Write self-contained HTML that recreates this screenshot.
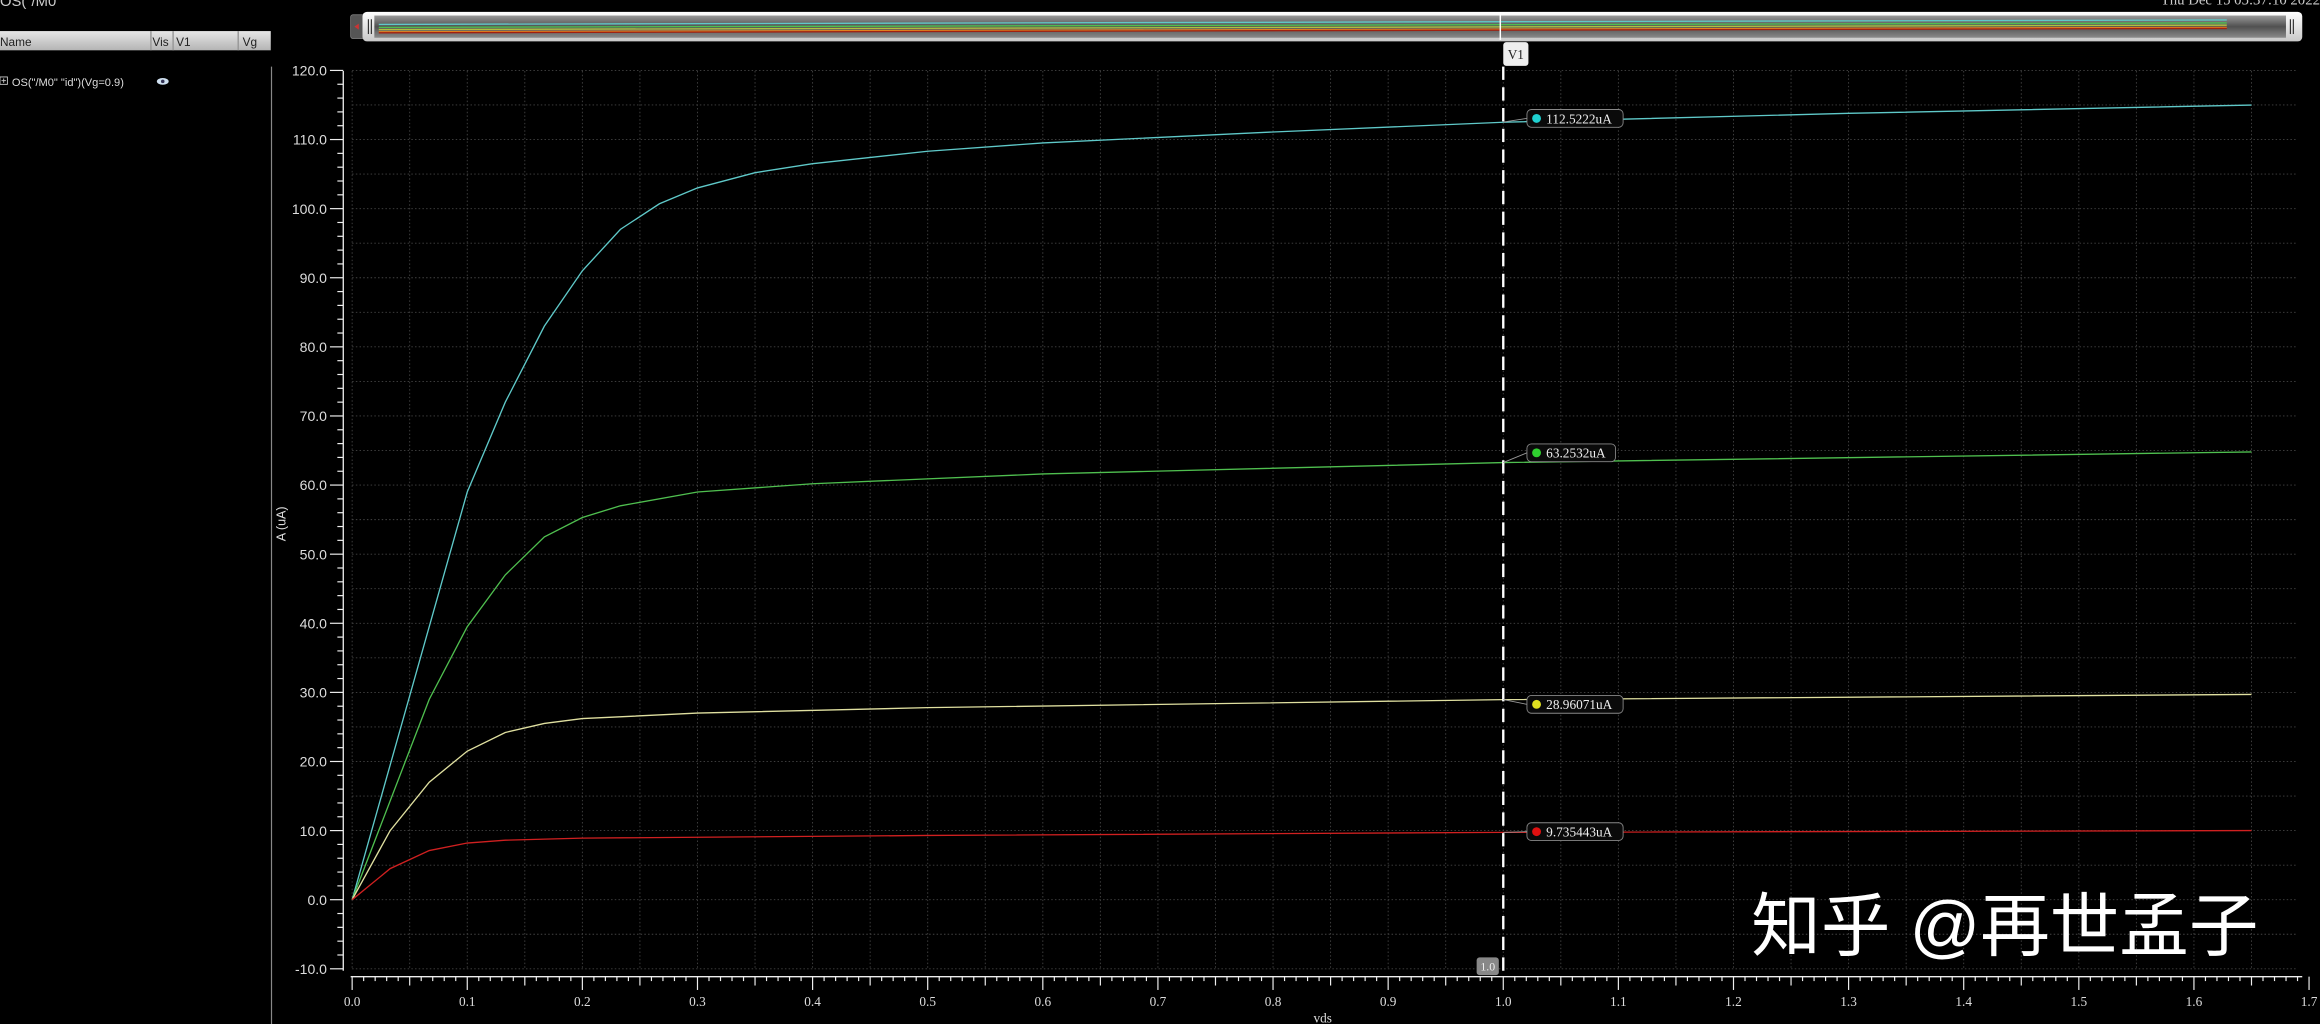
<!DOCTYPE html>
<html><head><meta charset="utf-8">
<style>
html,body{margin:0;padding:0;background:#000;width:2320px;height:1024px;overflow:hidden}
svg{display:block}
text{font-family:"Liberation Sans",sans-serif}
.s{font-family:"Liberation Serif",serif}
</style></head>
<body>
<svg id="g" width="2320" height="1024" viewBox="0 0 1568 692" preserveAspectRatio="none" xmlns="http://www.w3.org/2000/svg">
<defs>
<linearGradient id="hdr" x1="0" y1="0" x2="0" y2="1"><stop offset="0" stop-color="#e6e6e6"/><stop offset="1" stop-color="#b4b4b4"/></linearGradient>
<linearGradient id="bar" x1="0" y1="0" x2="0" y2="1"><stop offset="0" stop-color="#9a9a9a"/><stop offset="0.5" stop-color="#505050"/><stop offset="1" stop-color="#8a8a8a"/></linearGradient>
<linearGradient id="frm" x1="0" y1="0" x2="0" y2="1"><stop offset="0" stop-color="#ffffff"/><stop offset="1" stop-color="#c8c8c8"/></linearGradient>
</defs>
<rect width="1568" height="692" fill="#000"/>
<!-- top-left title -->
<text x="0" y="4" fill="#ccc" font-size="10">OS("/M0</text>
<!-- header -->
<rect x="0" y="21" width="183" height="13" fill="url(#hdr)"/>
<line x1="102" y1="21" x2="102" y2="34" stroke="#999"/>
<line x1="117" y1="21" x2="117" y2="34" stroke="#999"/>
<line x1="161" y1="21" x2="161" y2="34" stroke="#999"/>
<text x="0" y="31" font-size="8" fill="#222">Name</text>
<text x="103" y="31" font-size="8" fill="#222">Vis</text>
<text x="119" y="31" font-size="8" fill="#222">V1</text>
<text x="164" y="31" font-size="8" fill="#222">Vg</text>
<rect x="0" y="52" width="5" height="5" fill="none" stroke="#ccc" stroke-width="0.6"/>
<line x1="1" y1="54.5" x2="4" y2="54.5" stroke="#ccc" stroke-width="0.6"/><line x1="2.5" y1="53" x2="2.5" y2="56" stroke="#ccc" stroke-width="0.6"/>
<text x="8" y="58" font-size="7.5" fill="#ddd">OS("/M0" "id")(Vg=0.9)</text>
<ellipse cx="110" cy="55" rx="4" ry="2.3" fill="#cfe0f0"/><circle cx="110" cy="55" r="1.2" fill="#335"/>
<line x1="183.5" y1="45" x2="183.5" y2="692" stroke="#888" stroke-width="0.8"/>
<!-- date -->
<text x="1568" y="3" text-anchor="end" class="s" font-size="10" fill="#ccc">Thu Dec 15 05:37:10 2022</text>
<!-- scrollbar -->
<rect x="237" y="10" width="10" height="16" rx="1.5" fill="#555" stroke="#888" stroke-width="0.5"/>
<path d="M239.5 18 l3 -2 v4 z" fill="#c33"/>
<rect x="245" y="8" width="1311" height="20" rx="3" fill="url(#frm)"/>
<rect x="253" y="10.5" width="1292" height="15" fill="url(#bar)"/>
<line x1="249" y1="13" x2="249" y2="23" stroke="#333" stroke-width="0.8"/><line x1="251" y1="13" x2="251" y2="23" stroke="#333" stroke-width="0.8"/>
<line x1="1548" y1="13" x2="1548" y2="23" stroke="#333" stroke-width="0.8"/><line x1="1550" y1="13" x2="1550" y2="23" stroke="#333" stroke-width="0.8"/>
<g id="mini"></g>
<line x1="1014" y1="9" x2="1014" y2="27" stroke="#fff" stroke-width="1"/>
<!-- V1 tag -->
<rect x="1016" y="28.5" width="17" height="16" rx="2" fill="#eee"/>
<text x="1024.5" y="40" text-anchor="middle" class="s" font-size="9" fill="#222">V1</text>
<g id="grid"></g>
<g id="axes"></g>
<g id="curves"></g>
<!-- cursor -->
<line x1="1016" y1="45" x2="1016" y2="656" stroke="#fff" stroke-width="1.6" stroke-dasharray="9,5"/>
<rect x="998" y="647" width="15" height="12" rx="2" fill="#888"/>
<text x="1005.5" y="656" text-anchor="middle" class="s" font-size="8" fill="#eee">1.0</text>
<g id="labels"></g>
<text x="894" y="691" text-anchor="middle" class="s" font-size="9" fill="#ddd">vds</text>
<text transform="translate(193,354) rotate(-90)" text-anchor="middle" font-size="8.5" fill="#ddd">A (uA)</text>
<text x="1355" y="642" text-anchor="middle" font-family="'Liberation Sans','Noto Sans CJK SC',sans-serif" font-size="47" fill="#fff">知乎 @再世孟子</text>
</svg>
<script>
var NS="http://www.w3.org/2000/svg";
function el(p,t,a,txt){var e=document.createElementNS(NS,t);for(var k in a)e.setAttribute(k,a[k]);if(txt!=null)e.textContent=txt;document.getElementById(p).appendChild(e);return e;}
var X0=238,XS=778,Y0=608,YS=4.67;
function X(v){return X0+XS*v}function Y(v){return Y0-YS*v}
// grid
for(var i=0;i<=33;i++){var x=X(i*0.05);if(x>1552)break;el("grid","line",{x1:x,y1:48,x2:x,y2:655,stroke:"#444","stroke-width":0.6,"stroke-dasharray":"1,1.5"});}
for(var v=-10;v<=120;v+=5){var y=Y(v);el("grid","line",{x1:238,y1:y,x2:1552,y2:y,stroke:"#444","stroke-width":0.6,"stroke-dasharray":"1,1.5"});}
// y axis
el("axes","line",{x1:232,y1:48,x2:232,y2:656,stroke:"#eee","stroke-width":0.9});
for(var v=-10;v<=120;v+=2){var y=Y(v),L=(v%10==0)?9:4;el("axes","line",{x1:232-L,y1:y,x2:232,y2:y,stroke:"#eee","stroke-width":0.8});
 if(v%10==0)el("axes","text",{x:221,y:y+3.5,"text-anchor":"end","font-size":9.5,fill:"#ddd"},v.toFixed(1));}
// x axis
el("axes","line",{x1:237,y1:660,x2:1556,y2:660,stroke:"#eee","stroke-width":0.9});
for(var i=0;i<=170;i++){var x=X(i/100),L=(i%10==0)?9:(i%5==0?6:3);el("axes","line",{x1:x,y1:660,x2:x,y2:660+L,stroke:"#eee","stroke-width":0.8});
 if(i%10==0)el("axes","text",{x:x,y:680,"text-anchor":"middle","class":"s","font-size":9,fill:"#ddd"},(i/100).toFixed(1));}
// curves
var C=[
["#5fc9c9",[[0,0],[0.1,59],[0.133,72],[0.167,83],[0.2,91],[0.233,97],[0.267,100.7],[0.3,103],[0.35,105.2],[0.4,106.5],[0.5,108.3],[0.6,109.5],[0.8,111.1],[1.0,112.5],[1.3,113.8],[1.65,115]]],
["#4fbf4f",[[0,0],[0.067,29],[0.1,39.5],[0.133,47],[0.167,52.5],[0.2,55.3],[0.233,57],[0.3,59],[0.4,60.2],[0.6,61.6],[1.0,63.25],[1.65,64.8]]],
["#e0e0a0",[[0,0],[0.033,10],[0.067,17],[0.1,21.5],[0.133,24.2],[0.167,25.5],[0.2,26.2],[0.3,27],[0.5,27.8],[1.0,28.96],[1.65,29.7]]],
["#d02020",[[0,0],[0.033,4.5],[0.067,7.1],[0.1,8.2],[0.133,8.6],[0.2,8.9],[0.5,9.3],[1.0,9.74],[1.65,10.0]]]];
C.forEach(function(c){var pts=c[1].map(function(p){return X(p[0]).toFixed(1)+","+Y(p[1]).toFixed(1)}).join(" ");
 el("curves","polyline",{points:pts,fill:"none",stroke:c[0],"stroke-width":0.9});});
// mini curves in scrollbar
var M=[["#5fc9c9",13.5],["#4fbf4f",15.5],["#b0c040",17],["#e08020",18.5],["#a02010",19.2]];
M.forEach(function(m){el("mini","line",{x1:256,y1:m[1]+3,x2:1505,y2:m[1],stroke:m[0],"stroke-width":0.9});});
// labels
var Lb=[["#1fd0d0",112.5222,"112.5222uA",80],["#2fd02f",63.2532,"63.2532uA",306],["#e0e020",28.96071,"28.96071uA",476],["#e01010",9.735443,"9.735443uA",562]];
Lb.forEach(function(l){var y=l[3],w=l[2].length*5.1+14;
 el("labels","line",{x1:1016,y1:Y(l[1]),x2:1032,y2:y,stroke:"#999","stroke-width":0.6});
 el("labels","rect",{x:1032,y:y-6,width:w,height:12,rx:3,fill:"#0a0a0a",stroke:"#888","stroke-width":0.6});
 el("labels","circle",{cx:1038.5,cy:y,r:3,fill:l[0]});
 el("labels","text",{x:1045,y:y+3.3,"class":"s","font-size":9,fill:"#eee"},l[2]);});
</script>
</body></html>
